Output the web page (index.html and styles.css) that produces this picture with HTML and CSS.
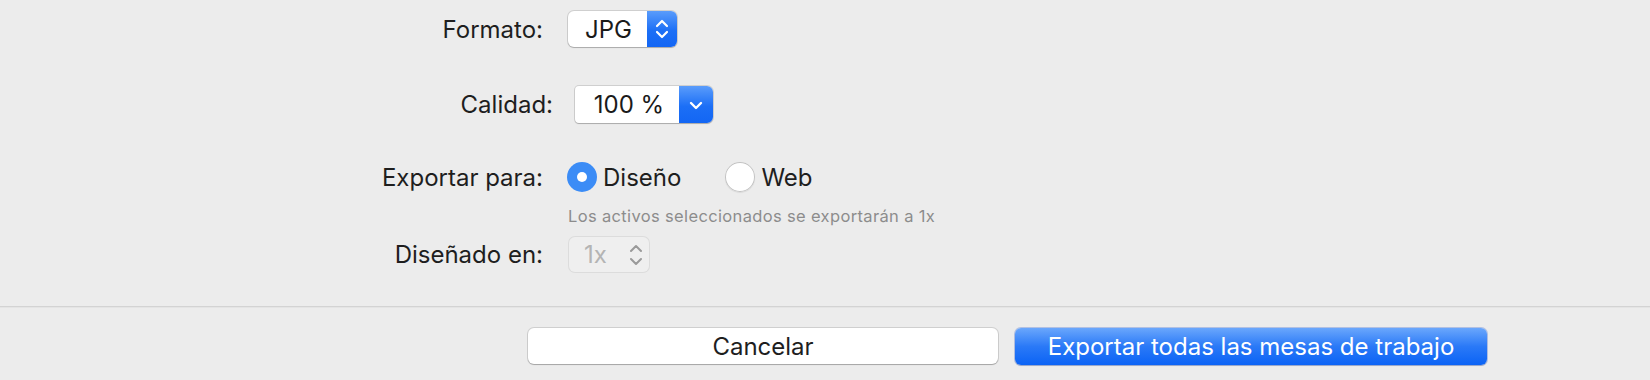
FILE: index.html
```html
<!DOCTYPE html>
<html lang="es">
<head>
<meta charset="utf-8">
<title>Exportar</title>
<link rel="stylesheet" href="styles.css">
</head>
<body>
<div class="panel">
  <div class="form">
    <div class="row row-format">
      <div class="label">Formato:</div>
      <div class="select select-format">
        <span class="select-value">JPG</span>
        <span class="select-btn">
          <svg width="14" height="24" viewBox="0 0 14 24"><path d="M2 9 L7 4 L12 9 M2 15 L7 20 L12 15" fill="none" stroke="#fff" stroke-width="2.2" stroke-linecap="round" stroke-linejoin="round"/></svg>
        </span>
      </div>
    </div>
    <div class="row row-quality">
      <div class="label label-quality">Calidad:</div>
      <div class="select select-quality">
        <span class="select-value">100 %</span>
        <span class="select-btn">
          <svg width="16" height="12" viewBox="0 0 16 12"><path d="M3 4 L8 9 L13 4" fill="none" stroke="#fff" stroke-width="2.4" stroke-linecap="round" stroke-linejoin="round"/></svg>
        </span>
      </div>
    </div>
    <div class="row row-export">
      <div class="label">Exportar para:</div>
      <div class="radios">
        <label class="radio"><span class="radio-dot on"></span><span>Diseño</span></label>
        <label class="radio"><span class="radio-dot"></span><span>Web</span></label>
      </div>
    </div>
    <div class="hint">Los activos seleccionados se exportarán a 1x</div>
    <div class="row row-design">
      <div class="label">Diseñado en:</div>
      <div class="stepper">
        <span class="stepper-value">1x</span>
        <svg width="16" height="26" viewBox="0 0 16 26"><path d="M3 9 L8 4 L13 9 M3 17 L8 22 L13 17" fill="none" stroke="#9a9a9a" stroke-width="2" stroke-linecap="round" stroke-linejoin="round"/></svg>
      </div>
    </div>
  </div>
  <div class="separator"></div>
  <div class="actions">
    <button class="btn btn-cancel">Cancelar</button>
    <button class="btn btn-primary">Exportar todas las mesas de trabajo</button>
  </div>
</div>
</body>
</html>
```
FILE: styles.css
```css
* { box-sizing: border-box; }
html, body { margin: 0; padding: 0; }
body {
  background: #ececec;
  font-family: Inter, "Liberation Sans", sans-serif;
  color: #1e1e1e;
  width: 1650px;
  height: 380px;
  overflow: hidden;
}
.panel { padding-top: 11px; }
.form { display: flex; flex-direction: column; }
.row { display: flex; align-items: center; height: 36px; }
.label {
  width: 543px;
  text-align: right;
  font-size: 24px;
  margin-right: 25px;
}
.label-quality { width: 553px; margin-right: 22px; }
.row-quality { margin-top: 39px; height: 37px; }
.row-export { margin-top: 38px; height: 32px; }
.row-design { margin-top: 9px; height: 35px; }

.select {
  display: flex;
  height: 36px;
  background: #fff;
  border-radius: 6px;
  box-shadow: 0 0 0 1px rgba(0,0,0,0.12), 0 1px 1px rgba(0,0,0,0.18);
  overflow: hidden;
}
.select-format { width: 109px; }
.select-quality { width: 138px; height: 37px; border-radius: 4px 6px 6px 4px; }
.select-value {
  flex: 1;
  display: flex;
  align-items: center;
  justify-content: center;
  font-size: 24px;
  color: #1a1a1a;
}
.select-format .select-value { padding-left: 2px; }
.select-quality .select-value { padding-left: 4px; }
.select-btn {
  width: 30px;
  display: flex;
  align-items: center;
  justify-content: center;
  background: linear-gradient(#5a9cfb, #1c6ff6 55%, #1366f4);
}
.select-quality .select-btn { width: 34px; }

.radios { display: flex; align-items: center; margin-left: -1px; }
.radio { display: flex; align-items: center; font-size: 24px; }
.radio + .radio { margin-left: 44px; }
.radio-dot {
  width: 30px;
  height: 30px;
  border-radius: 50%;
  background: #fff;
  box-shadow: inset 0 0 0 1px #c2c2c2, 0 1px 1px rgba(0,0,0,0.08);
  margin-right: 6px;
  position: relative;
}
.radio-dot.on {
  background: #3b8cf6;
  box-shadow: none;
}
.radio-dot.on::after {
  content: "";
  position: absolute;
  left: 10px;
  top: 10px;
  width: 10px;
  height: 10px;
  border-radius: 50%;
  background: #fff;
}

.hint {
  margin-top: 11px;
  margin-left: 568px;
  font-size: 16.5px;
  color: #8c8c8c;
  height: 24px;
  line-height: 24px;
  letter-spacing: 0.35px;
}

.stepper {
  margin-left: 1px;
  width: 80px;
  height: 35px;
  border-radius: 6px;
  background: #efefef;
  box-shadow: 0 0 0 1px #dcdcdc;
  display: flex;
  align-items: center;
  justify-content: space-between;
  padding: 0 5px 0 15px;
}
.stepper-value { font-size: 24px; color: #b4b4b4; }

.separator {
  margin-top: 34px;
  height: 2px;
  background: #d3d3d3;
  border-bottom: 1px solid #e4e4e4;
}
.actions {
  display: flex;
  margin-top: 20px;
  padding-left: 528px;
  gap: 17px;
}
.btn {
  height: 36px;
  border: none;
  border-radius: 6px;
  font-family: inherit;
  font-size: 24px;
  padding: 0;
  display: flex;
  align-items: center;
  justify-content: center;
}
.btn-cancel {
  width: 470px;
  background: #fff;
  color: #1e1e1e;
  box-shadow: 0 0 0 1px rgba(0,0,0,0.12), 0 1px 1px rgba(0,0,0,0.2);
}
.btn-primary {
  width: 472px;
  height: 37px;
  color: #fff;
  background: linear-gradient(#6aa7fc, #2a79f7 50%, #0b63f5);
  box-shadow: 0 0 0 1px rgba(0,60,200,0.25), 0 1px 1px rgba(0,0,0,0.15);
}
```
